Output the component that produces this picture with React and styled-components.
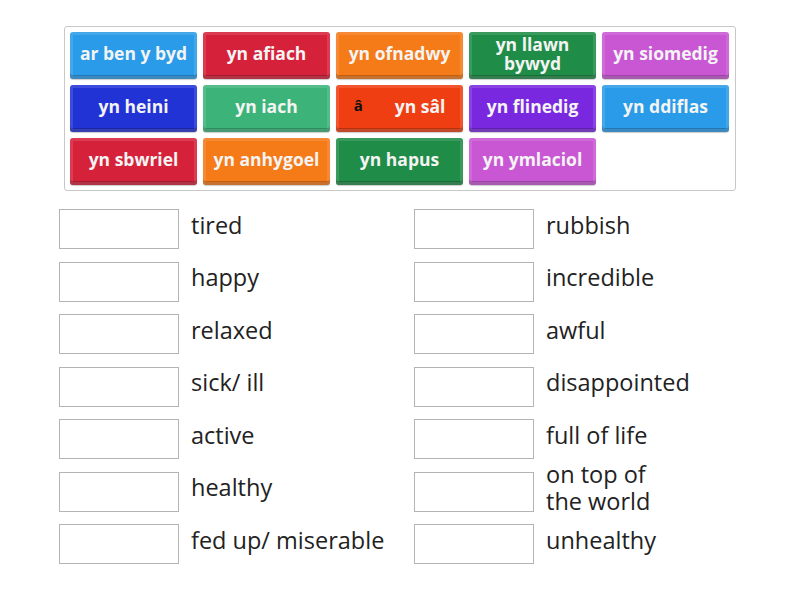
import React from 'react';
import styled, { createGlobalStyle } from 'styled-components';

const tiles = [
  { text: 'ar ben y byd', color: '#2a9be8' },
  { text: 'yn afiach', color: '#d6213a' },
  { text: 'yn ofnadwy', color: '#f57a18' },
  { text: 'yn llawn bywyd', color: '#1f8c48' },
  { text: 'yn siomedig', color: '#c957d4' },
  { text: 'yn heini', color: '#2233d6' },
  { text: 'yn iach', color: '#3cb479' },
  { text: 'yn sâl', color: '#ef3f12', extra: 'â' },
  { text: 'yn flinedig', color: '#7a28e0' },
  { text: 'yn ddiflas', color: '#2a9be8' },
  { text: 'yn sbwriel', color: '#d6213a' },
  { text: 'yn anhygoel', color: '#f57a18' },
  { text: 'yn hapus', color: '#1f8c48' },
  { text: 'yn ymlaciol', color: '#c957d4' },
];

const left = ['tired', 'happy', 'relaxed', 'sick/ ill', 'active', 'healthy', 'fed up/ miserable'];
const right = ['rubbish', 'incredible', 'awful', 'disappointed', 'full of life', 'on top of the world', 'unhealthy'];

const GlobalStyle = createGlobalStyle`
  body {
    margin: 0;
    background: #fff;
    font-family: "Open Sans", "Liberation Sans", sans-serif;
  }
`

function App() {
  return (
    <Page>
      <GlobalStyle />
      <TileBox>
        {tiles.map((t, i) => (
          <Tile key={i} $color={t.color}>
            {t.extra && <Stray>{t.extra}</Stray>}
            <span>{t.text === 'yn llawn bywyd' ? <>yn llawn<br />bywyd</> : t.text}</span>
          </Tile>
        ))}
      </TileBox>
      <Answers>
        <Column>
          {left.map((l) => (
            <Row key={l}>
              <Slot />
              <Label>{l}</Label>
            </Row>
          ))}
        </Column>
        <Column>
          {right.map((l) => (
            <Row key={l}>
              <Slot />
              <Label>{l === 'on top of the world' ? <>on top of<br />the world</> : l}</Label>
            </Row>
          ))}
        </Column>
      </Answers>
    </Page>
  )
}

const Page = styled.div`
  width: 800px;
  height: 600px;
  padding-top: 26px;
  box-sizing: border-box;
`

const TileBox = styled.div`
  width: 672px;
  box-sizing: border-box;
  margin: 0 auto;
  border: 1px solid #c8c8c8;
  border-radius: 3px;
  padding: 5px;
  display: grid;
  grid-template-columns: repeat(5, 127px);
  grid-auto-rows: 47px;
  gap: 6px;
`

const Tile = styled.div`
  background: ${p => p.$color};
  border-radius: 3px;
  box-shadow: inset 0 0 0 3px rgba(255,255,255,0.12), inset 0 -4px 0 rgba(0,0,0,0.22), 0 1px 1px rgba(0,0,0,0.2);
  color: #f4f4f4;
  font-family: "Open Sans", sans-serif;
  font-weight: 700;
  font-size: 17.5px;
  line-height: 19px;
  display: flex;
  align-items: center;
  justify-content: center;
  gap: 32px;
  text-align: center;
  padding-bottom: 4px;
  box-sizing: border-box;
`

const Stray = styled.span`
  color: #111;
  font-size: 15px;
  margin-bottom: 2px;
`

const Answers = styled.div`
  display: flex;
  padding-left: 59px;
  margin-top: 18px;
`

const Column = styled.div`
  width: 355px;
  display: flex;
  flex-direction: column;
  gap: 12.5px;
`

const Row = styled.div`
  display: flex;
  align-items: center;
  height: 40px;
`

const Slot = styled.div`
  width: 120px;
  height: 40px;
  box-sizing: border-box;
  border: 1px solid #b4b4b4;
  background: #fff;
  flex-shrink: 0;
`

const Label = styled.div`
  margin-left: 12px;
  font-size: 23.5px;
  line-height: 27px;
  color: #222;
  padding-bottom: 8px;
`

export default App
